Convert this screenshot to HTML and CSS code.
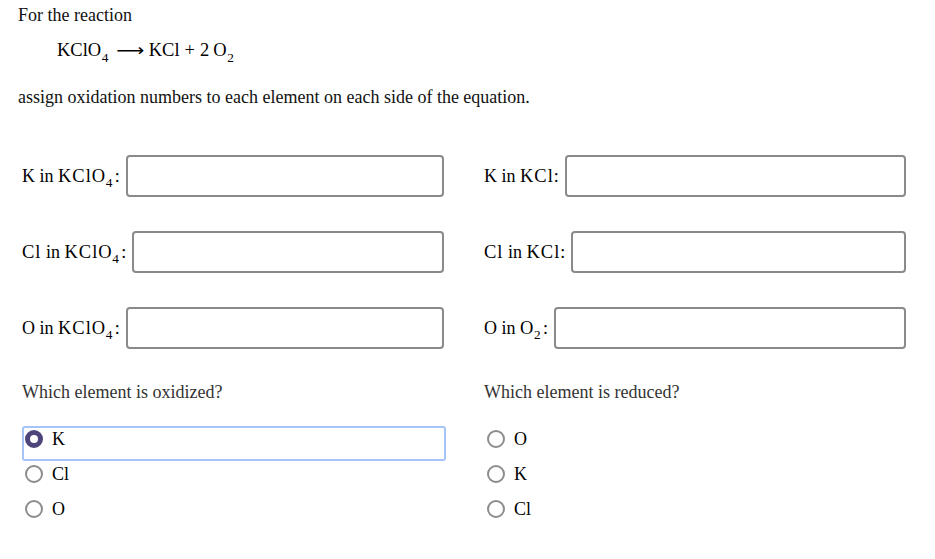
FILE: index.html
```html
<!DOCTYPE html>
<html>
<head>
<meta charset="utf-8">
<link rel="stylesheet" href="styles.css">
</head>
<body>
<div class="page">
  <p class="intro first">For the reaction</p>
  <div class="eq"><span class="m">KClO<sub>4</sub></span><span class="arrow">⟶</span><span class="m">KCl</span><span class="op">+</span><span class="m">2</span><span class="m o2">O<sub>2</sub></span></div>
  <p class="intro">assign oxidation numbers to each element on each side of the equation.</p>

  <div class="grid fields">
    <div class="field"><span class="lbl">K in <span class="m">KClO<sub>4</sub></span>:</span><span class="box"></span></div>
    <div class="field"><span class="lbl">K in <span class="m">KCl</span>:</span><span class="box"></span></div>
    <div class="field"><span class="lbl"><span class="m">Cl</span> in <span class="m">KClO<sub>4</sub></span>:</span><span class="box"></span></div>
    <div class="field"><span class="lbl"><span class="m">Cl</span> in <span class="m">KCl</span>:</span><span class="box"></span></div>
    <div class="field"><span class="lbl">O in <span class="m">KClO<sub>4</sub></span>:</span><span class="box"></span></div>
    <div class="field"><span class="lbl">O in <span class="m">O<sub>2</sub></span>:</span><span class="box"></span></div>
  </div>

  <div class="grid questions">
    <div class="q">
      <p class="qtext">Which element is oxidized?</p>
      <div class="opts">
        <div class="opt selected"><span class="radio on"></span><span class="olbl">K</span></div>
        <div class="opt"><span class="radio"></span><span class="olbl">Cl</span></div>
        <div class="opt"><span class="radio"></span><span class="olbl">O</span></div>
      </div>
    </div>
    <div class="q right">
      <p class="qtext">Which element is reduced?</p>
      <div class="opts">
        <div class="opt"><span class="radio"></span><span class="olbl">O</span></div>
        <div class="opt"><span class="radio"></span><span class="olbl">K</span></div>
        <div class="opt"><span class="radio"></span><span class="olbl">Cl</span></div>
      </div>
    </div>
  </div>
</div>
</body>
</html>
```

FILE: styles.css
```css
* { box-sizing: border-box; }
html, body { margin: 0; padding: 0; background: #fff; }
body {
  font-family: "Liberation Serif", "Times New Roman", serif;
  font-size: 18px;
  color: #111;
}
.page { padding: 5px 0 0 18px; width: 935px; }
.intro { margin: 0; line-height: 20px; }
.eq {
  margin: 10px 0 0 39px;
  height: 30px;
  display: flex;
  align-items: baseline;
  font-size: 18.5px;
  line-height: 30px;
  color: #000;
}
.m sub { font-size: 0.72em; vertical-align: -0.42em; line-height: 0; margin-left: 0.5px; }
.arrow {
  font-family: "DejaVu Sans", sans-serif;
  font-size: 17px;
  margin: 0 6px 0 10px;
  transform: scaleX(1.15);
}
.op { margin: 0 5px; }
.m + .o2 { margin-left: 4px; }
.eq + .intro { margin-top: 22px; }

.grid {
  display: grid;
  grid-template-columns: 424px 424px;
  column-gap: 38px;
  margin-left: 4px;
}
.fields { margin-top: 48px; row-gap: 34px; }
.field { display: flex; align-items: center; height: 42px; padding-right: 2px; }
.lbl { font-size: 18px; white-space: nowrap; margin-right: 6px; color: #000; }
.lbl .m { font-size: 18.5px; letter-spacing: 1px; }
.lbl .m sub { margin-left: -0.5px; margin-right: 1.5px; }
.box {
  flex: 1;
  height: 42px;
  border: 2px solid #8a8a8a;
  border-radius: 4px;
  background: #fff;
}

.questions { margin-top: 33px; }
.qtext { margin: 0; font-size: 18px; line-height: 20px; color: #333; }
.opts { margin-top: 24px; }
.opt {
  display: flex;
  align-items: flex-start;
  height: 35px;
  padding: 2px 0 0 1px;
  border: 2px solid transparent;
  border-radius: 3px;
}
.opt.selected { border-color: #a6c4f7; }
.radio {
  width: 18px; height: 18px;
  border-radius: 50%;
  border: 2px solid #8c8c8c;
  flex: none;
}
.radio.on { border: 5px solid #4d4479; background: #fff; }
.olbl { margin-left: 9px; font-size: 18px; line-height: 18px; color: #000; }
```
